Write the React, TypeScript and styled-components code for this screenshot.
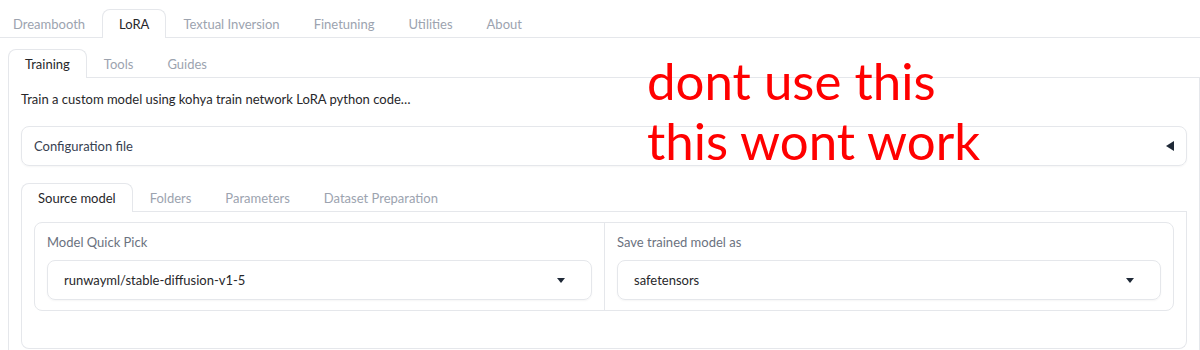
import styled, { createGlobalStyle } from "styled-components";

const GlobalStyle = createGlobalStyle`
  body {
    margin: 0;
    background: #ffffff;
    font-family: Lato, "Noto Sans", sans-serif;
    color: #27272a;
  }
`;

const mainTabs = ["Dreambooth", "LoRA", "Textual Inversion", "Finetuning", "Utilities", "About"];
const loraTabs = ["Training", "Tools", "Guides"];
const trainingTabs = ["Source model", "Folders", "Parameters", "Dataset Preparation"];

const Page = styled.div`
  position: relative;
  width: 1200px;
  height: 350px;
  overflow: hidden;
`;

const TabNav = styled.div<{ $shift?: number }>`
  display: flex;
  border-bottom: 1px solid #e5e7eb;
  margin-left: ${(p) => p.$shift ?? 0}px;
`;

const TopNav = styled(TabNav)`
  padding-top: 9px;
`;

const TabButton = styled.button<{ $active?: boolean }>`
  height: 29px;
  margin-bottom: -1px;
  padding: 0 16px;
  border: 1px solid ${(p) => (p.$active ? "#e5e7eb" : "transparent")};
  border-bottom: none;
  border-radius: 8px 8px 0 0;
  background: ${(p) => (p.$active ? "#ffffff" : "transparent")};
  font-family: Lato, "Noto Sans", sans-serif;
  font-size: 13px;
  color: ${(p) => (p.$active ? "#27272a" : "#9ca3af")};
  cursor: pointer;
`;

const LoraPanel = styled.div`
  padding: 11px 0 0 8px;
`;

const TrainingPanel = styled.div`
  border: 1px solid #e5e7eb;
  border-top: none;
  padding: 11px 12px 20px;
`;

const Description = styled.p`
  margin: 0;
  font-size: 13px;
  line-height: 20px;
`;

const Accordion = styled.div`
  margin-top: 17px;
  height: 40px;
  box-sizing: border-box;
  display: flex;
  align-items: center;
  justify-content: space-between;
  padding: 0 12px;
  border: 1px solid #e5e7eb;
  border-radius: 8px;
  box-shadow: 0 1px 2px rgba(0, 0, 0, 0.04);
  font-size: 13px;
  color: #374151;
`;

const SourceNav = styled(TabNav)`
  margin-top: 17px;
`;

const SubPanel = styled.div`
  border: 1px solid #e5e7eb;
  border-top: none;
  border-radius: 0 0 8px 8px;
  padding: 10px 12px 37px;
`;

const FieldRow = styled.div`
  display: grid;
  grid-template-columns: 1fr 1fr;
  border: 1px solid #e5e7eb;
  border-radius: 8px;
`;

const Field = styled.div<{ $divider?: boolean }>`
  display: flex;
  flex-direction: column;
  gap: 8px;
  padding: 9px 12px 10px;
  border-left: ${(p) => (p.$divider ? "1px solid #e5e7eb" : "none")};
`;

const Label = styled.span`
  font-size: 13px;
  line-height: 20px;
  color: #6b7280;
`;

const Select = styled.div`
  height: 40px;
  box-sizing: border-box;
  display: flex;
  align-items: center;
  justify-content: space-between;
  padding: 0 26px 0 16px;
  border: 1px solid #e5e7eb;
  border-radius: 8px;
  box-shadow: 0 1px 2px rgba(0, 0, 0, 0.04);
  font-size: 13px;
  color: #27272a;
`;

const Overlay = styled.div`
  position: absolute;
  left: 647px;
  top: 51px;
  font-family: Lato, "Noto Sans", sans-serif;
  font-size: 51px;
  line-height: 60px;
  color: #ff0000;
  pointer-events: none;
`;

const CaretDown = () => (
  <svg width="8" height="5" viewBox="0 0 8 5">
    <polygon points="0,0 8,0 4,5" fill="#1f2937" />
  </svg>
);

const CaretLeft = () => (
  <svg width="8" height="10" viewBox="0 0 8 10">
    <polygon points="8,0 8,10 0,5" fill="#1f2937" />
  </svg>
);

const App = () => {
  return (
    <Page>
      <GlobalStyle />
      <TopNav $shift={-4}>
        {mainTabs.map((t) => (
          <TabButton key={t} $active={t === "LoRA"}>
            {t}
          </TabButton>
        ))}
      </TopNav>
      <LoraPanel>
        <TabNav>
          {loraTabs.map((t) => (
            <TabButton key={t} $active={t === "Training"}>
              {t}
            </TabButton>
          ))}
        </TabNav>
        <TrainingPanel>
          <Description>Train a custom model using kohya train network LoRA python code…</Description>
          <Accordion>
            <span>Configuration file</span>
            <CaretLeft />
          </Accordion>
          <SourceNav>
            {trainingTabs.map((t) => (
              <TabButton key={t} $active={t === "Source model"}>
                {t}
              </TabButton>
            ))}
          </SourceNav>
          <SubPanel>
            <FieldRow>
              <Field>
                <Label>Model Quick Pick</Label>
                <Select>
                  <span>runwayml/stable-diffusion-v1-5</span>
                  <CaretDown />
                </Select>
              </Field>
              <Field $divider>
                <Label>Save trained model as</Label>
                <Select>
                  <span>safetensors</span>
                  <CaretDown />
                </Select>
              </Field>
            </FieldRow>
          </SubPanel>
        </TrainingPanel>
      </LoraPanel>
      <Overlay>
        dont use this
        <br />
        this wont work
      </Overlay>
    </Page>
  );
};

export default App;
